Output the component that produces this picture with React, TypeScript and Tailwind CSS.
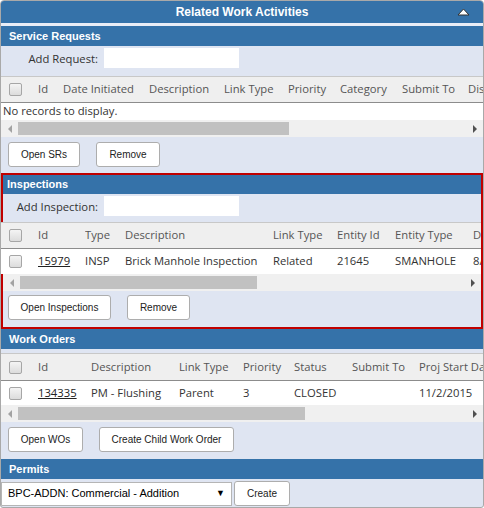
import React from "react";

const blue = "bg-[#3572a9]";
const arial = "[font-family:'Liberation_Sans',Arial,sans-serif]";

function Checkbox() {
  return (
    <span className="ml-[8px] block h-[13px] w-[13px] rounded-[2px] border border-[#a6a6a6] bg-gradient-to-b from-[#f4f4f4] to-[#dcdcdc]" />
  );
}

function SectionHeader({ title }: { title: string }) {
  return (
    <div className={`${blue} ${arial} flex h-[20px] items-center pl-[8px] text-[11px] font-bold text-white`}>
      {title}
    </div>
  );
}

type Col = { label: string; w: number };

function GridHeader({ cols, h }: { cols: Col[]; h: number }) {
  return (
    <div
      className="flex items-center overflow-hidden whitespace-nowrap border-t border-b border-t-[#c8c8c8] border-b-[#8c8c8c] bg-[#efefef] text-[11.25px] text-[#555]"
      style={{ height: h }}
    >
      <div className="w-[37px] shrink-0">
        <Checkbox />
      </div>
      {cols.map((c) => (
        <div key={c.label} className="shrink-0 overflow-hidden" style={{ width: c.w }}>
          {c.label}
        </div>
      ))}
    </div>
  );
}

function GridRow({ cols, cells, h }: { cols: Col[]; cells: string[]; h: number }) {
  return (
    <div
      className="flex items-center overflow-hidden whitespace-nowrap bg-white text-[11.25px] text-[#333]"
      style={{ height: h }}
    >
      <div className="w-[37px] shrink-0">
        <Checkbox />
      </div>
      {cols.map((c, i) => (
        <div key={c.label} className="shrink-0 overflow-hidden" style={{ width: c.w }}>
          {i === 0 ? <span className="text-[#222] underline">{cells[i]}</span> : cells[i]}
        </div>
      ))}
    </div>
  );
}

function Scrollbar({ thumb }: { thumb: number }) {
  return (
    <div className="flex h-[17px] items-center bg-[#f0f0f0]">
      <div className="flex w-[17px] shrink-0 justify-center">
        <span className="h-0 w-0 border-y-[4px] border-r-[4px] border-y-transparent border-r-[#a3a3a3]" />
      </div>
      <div className="h-[13px] bg-[#c1c1c1]" style={{ width: thumb }} />
      <div className="flex-1" />
      <div className="flex w-[17px] shrink-0 justify-center">
        <span className="h-0 w-0 border-y-[4px] border-l-[4px] border-y-transparent border-l-[#505050]" />
      </div>
    </div>
  );
}

function Btn({ children, w }: { children: React.ReactNode; w: number }) {
  return (
    <button
      className={`${arial} flex h-[25px] items-center justify-center rounded-[3px] border border-[#adadad] bg-white text-[10px] text-[#222]`}
      style={{ width: w }}
    >
      {children}
    </button>
  );
}

function AddRow({ label, h }: { label: string; h: number }) {
  return (
    <div className="flex items-start pt-[2px]" style={{ height: h }}>
      <div className="w-[100px] pr-[3px] pt-[3px] text-right text-[11.25px] text-[#333]">{label}</div>
      <div className="ml-[3px] h-[20px] w-[135px] bg-white" />
    </div>
  );
}

const srCols: Col[] = [
  { label: "Id", w: 25 },
  { label: "Date Initiated", w: 86 },
  { label: "Description", w: 75 },
  { label: "Link Type", w: 64 },
  { label: "Priority", w: 52 },
  { label: "Category", w: 62 },
  { label: "Submit To", w: 66 },
  { label: "Disposition", w: 80 },
];

const inspCols: Col[] = [
  { label: "Id", w: 47 },
  { label: "Type", w: 40 },
  { label: "Description", w: 148 },
  { label: "Link Type", w: 64 },
  { label: "Entity Id", w: 58 },
  { label: "Entity Type", w: 78 },
  { label: "Date", w: 80 },
];

const woCols: Col[] = [
  { label: "Id", w: 53 },
  { label: "Description", w: 88 },
  { label: "Link Type", w: 64 },
  { label: "Priority", w: 51 },
  { label: "Status", w: 58 },
  { label: "Submit To", w: 67 },
  { label: "Proj Start Date", w: 100 },
];

export default function App() {
  return (
    <div
      className="h-[508px] w-[484px] overflow-hidden rounded-t-[4px] rounded-b-[3px] border border-[#a9a9a9] bg-[#dfe5f2]"
      style={{ fontFamily: '"Open Sans", "Liberation Sans", sans-serif' }}
    >
      {/* titre */}
      <div className={`${blue} ${arial} relative flex h-[22px] items-center justify-center text-[12px] font-bold text-white`}>
        Related Work Activities
        <svg className="absolute right-[13px] top-[7px]" width="13" height="8" viewBox="0 0 13 8">
          <path d="M1 7 L6.5 1 L12 7 Z" fill="#fff" stroke="#333" strokeWidth="1" />
        </svg>
      </div>
      <div className="h-[3px] bg-[#e9edf6]" />

      {/* Service Requests */}
      <SectionHeader title="Service Requests" />
      <AddRow label="Add Request:" h={30} />
      <GridHeader cols={srCols} h={27} />
      <div className="flex h-[17px] items-center bg-white pl-[2px] text-[11.25px] text-[#333]">No records to display.</div>
      <Scrollbar thumb={271} />
      <div className="flex h-[36px] gap-[16px] pl-[7px] pt-[5px]">
        <Btn w={72}>Open SRs</Btn>
        <Btn w={64}>Remove</Btn>
      </div>

      {/* Inspections */}
      <div className="border-2 border-[#c00000]">
        <div className={`${blue} ${arial} flex h-[19px] items-center pl-[4px] text-[11px] font-bold text-white`}>
          Inspections
        </div>
        <div className="-ml-[2px]">
          <AddRow label="Add Inspection:" h={28} />
          <GridHeader cols={inspCols} h={27} />
          <GridRow
            h={25}
            cols={inspCols}
            cells={["15979", "INSP", "Brick Manhole Inspection", "Related", "21645", "SMANHOLE", "8/12/2015"]}
          />
        </div>
        <Scrollbar thumb={237} />
        <div className="flex h-[36px] gap-[16px] pl-[5px] pt-[4px]">
          <Btn w={103}>Open Inspections</Btn>
          <Btn w={63}>Remove</Btn>
        </div>
      </div>

      {/* Work Orders */}
      <SectionHeader title="Work Orders" />
      <div className="h-[4px]" />
      <GridHeader cols={woCols} h={28} />
      <GridRow h={24} cols={woCols} cells={["134335", "PM - Flushing", "Parent", "3", "CLOSED", "", "11/2/2015"]} />
      <Scrollbar thumb={287} />
      <div className="flex h-[37px] gap-[16px] pl-[7px] pt-[5px]">
        <Btn w={75}>Open WOs</Btn>
        <Btn w={135}>Create Child Work Order</Btn>
      </div>

      {/* Permits */}
      <SectionHeader title="Permits" />
      <div className={`${arial} flex items-center gap-[2px] pt-[2px]`}>
        <div className="flex h-[24px] w-[231px] items-center justify-between border border-[#b5b5b5] bg-white pl-[6px] pr-[6px] text-[11px] text-black">
          <span>BPC-ADDN: Commercial - Addition</span>
          <span className="text-[9px]">▼</span>
        </div>
        <Btn w={56}>Create</Btn>
      </div>
    </div>
  );
}
